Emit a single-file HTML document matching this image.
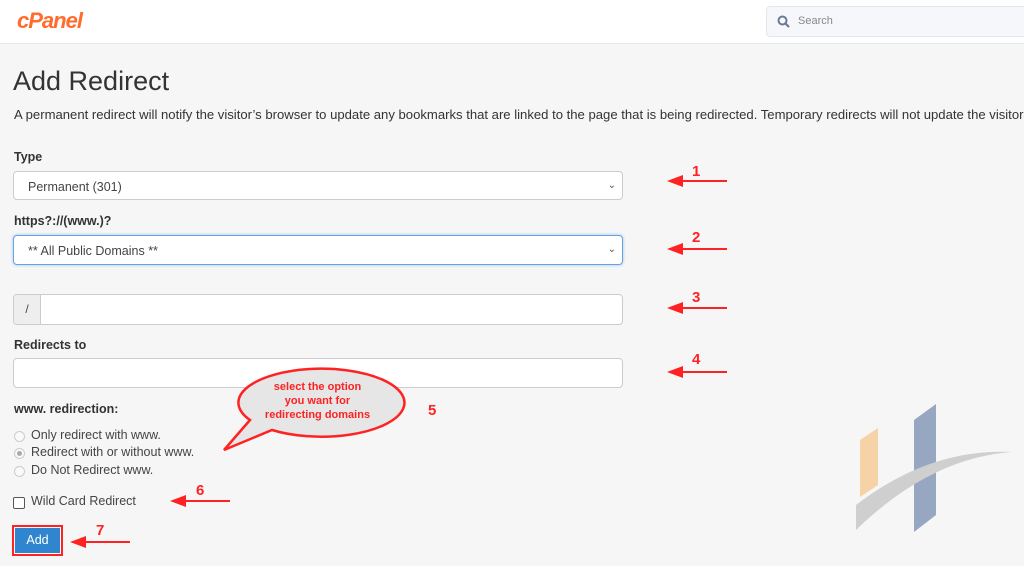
<!DOCTYPE html>
<html><head><meta charset="utf-8"><style>
*{margin:0;padding:0;box-sizing:border-box}
body{width:1024px;height:566px;overflow:hidden;background:#f6f6f6;font-family:"Liberation Sans",sans-serif;color:#333;position:relative}
.hdr{position:absolute;left:0;top:0;width:1024px;height:44px;background:#fff;border-bottom:1px solid #e6e8ec}
.logo{position:absolute;left:17px;top:8px;font:italic bold 22px "Liberation Sans",sans-serif;color:#ff6c2c;letter-spacing:-1px}
.search{position:absolute;left:766px;top:6px;width:270px;height:31px;background:#f5f7fa;border:1px solid #e3e7ed;border-radius:4px}
.search span{position:absolute;left:31px;top:8px;font-size:11px;color:#888}
.a{position:absolute}
h1{position:absolute;left:13px;top:66px;font-weight:normal;font-size:27px;color:#333}
.p{left:14px;top:107px;font-size:13.1px;white-space:nowrap;color:#333}
.lbl{font-size:12.5px;font-weight:bold;color:#333}
.box{position:absolute;left:13px;width:610px;background:#fff;border:1px solid #ccc;border-radius:4px;font-size:12.5px;color:#444;padding:8px 14px}
.chev{position:absolute;right:6px;top:8px;font-size:10px;color:#555}
.opt{font-size:12.5px;color:#444;left:31px}
.rad{position:absolute;left:14px;width:11px;height:11px;border:1px solid #ccc;border-radius:50%;background:#fafafa}
.n{font:bold 15px "Liberation Sans",sans-serif;color:#f22}
</style></head><body>
<div class="hdr"><div class="logo">cPanel</div>
<div class="search"><svg style="position:absolute;left:10px;top:8px" width="13" height="13" viewBox="0 0 13 13"><circle cx="5.5" cy="5.5" r="4" fill="none" stroke="#6b7a93" stroke-width="2"/><path d="M8.5 8.5L12 12" stroke="#6b7a93" stroke-width="2.2"/></svg><span>Search</span></div></div>
<h1>Add Redirect</h1>
<div class="a p">A permanent redirect will notify the visitor’s browser to update any bookmarks that are linked to the page that is being redirected. Temporary redirects will not update the visitor’s</div>
<div class="a lbl" style="left:14px;top:150px">Type</div>
<div class="box" style="top:171px;height:29px">Permanent (301)<span class="chev">&#8964;</span></div>
<div class="a lbl" style="left:14px;top:214px">https?://(www.)?</div>
<div class="box" style="top:235px;height:30px;border-color:#66a3e0;box-shadow:0 0 3px #9cc4ee">** All Public Domains **<span class="chev">&#8964;</span></div>
<div class="box" style="top:294px;height:31px;padding:0"><div style="width:27px;height:29px;background:#eee;border-right:1px solid #ccc;border-radius:4px 0 0 4px;text-align:center;line-height:29px;font-size:12px">/</div></div>
<div class="a lbl" style="left:14px;top:338px">Redirects to</div>
<div class="box" style="top:358px;height:30px"></div>
<div class="a lbl" style="left:14px;top:402px">www. redirection:</div>
<div class="rad" style="top:431px"></div><div class="a opt" style="top:428px">Only redirect with www.</div>
<div class="rad" style="top:448px"><div style="width:5px;height:5px;border-radius:50%;background:#aaa;margin:2px"></div></div><div class="a opt" style="top:445px">Redirect with or without www.</div>
<div class="rad" style="top:466px"></div><div class="a opt" style="top:463px">Do Not Redirect www.</div>
<div class="a" style="left:13px;top:497px;width:12px;height:12px;border:1px solid #555;border-radius:2px;background:#fff"></div><div class="a opt" style="top:494px">Wild Card Redirect</div>
<div class="a" style="left:12px;top:525px;width:51px;height:31px;border:2px solid #f22;padding:1px"><div style="background:#2f86cf;height:100%;color:#fff;font-size:12.5px;text-align:center;line-height:25px">Add</div></div>
<svg class="a" style="left:0;top:0" width="1024" height="566">
<g stroke="#f22" stroke-width="2" fill="#f22">
<line x1="727" y1="181" x2="680" y2="181"/><polygon points="667,181 683,175 683,187" stroke="none"/>
<line x1="727" y1="249" x2="680" y2="249"/><polygon points="667,249 683,243 683,255" stroke="none"/>
<line x1="727" y1="308" x2="680" y2="308"/><polygon points="667,308 683,302 683,314" stroke="none"/>
<line x1="727" y1="372" x2="680" y2="372"/><polygon points="667,372 683,366 683,378" stroke="none"/>
<line x1="230" y1="501" x2="183" y2="501"/><polygon points="170,501 186,495 186,507" stroke="none"/>
<line x1="130" y1="542" x2="83" y2="542"/><polygon points="70,542 86,536 86,548" stroke="none"/>
</g>
<path d="M250 420 L224 450 L272 430 A83 34 0 1 0 250 420 Z" fill="#e6e6e6" stroke="#f22" stroke-width="2.5" stroke-linejoin="miter"/>
<polygon points="860,440 878,428 878,485 860,497" fill="#f6c994" opacity=".8"/>
<polygon points="914,420 936,404 936,515 914,532" fill="#8d9ebb" opacity=".9"/>
<path d="M856 505 Q930 448 1012 452 Q930 458 856 530 Z" fill="#cfcfcf"/>
</svg>
<div class="a n" style="left:692px;top:163px">1</div>
<div class="a n" style="left:692px;top:229px">2</div>
<div class="a n" style="left:692px;top:289px">3</div>
<div class="a n" style="left:692px;top:351px">4</div>
<div class="a n" style="left:428px;top:402px">5</div>
<div class="a n" style="left:196px;top:482px">6</div>
<div class="a n" style="left:96px;top:522px">7</div>
<div class="a" style="left:245px;top:380px;width:145px;text-align:center;font:bold 11px/14px 'Liberation Sans',sans-serif;color:#f22">select the option<br>you want for<br>redirecting domains</div>
</body></html>
